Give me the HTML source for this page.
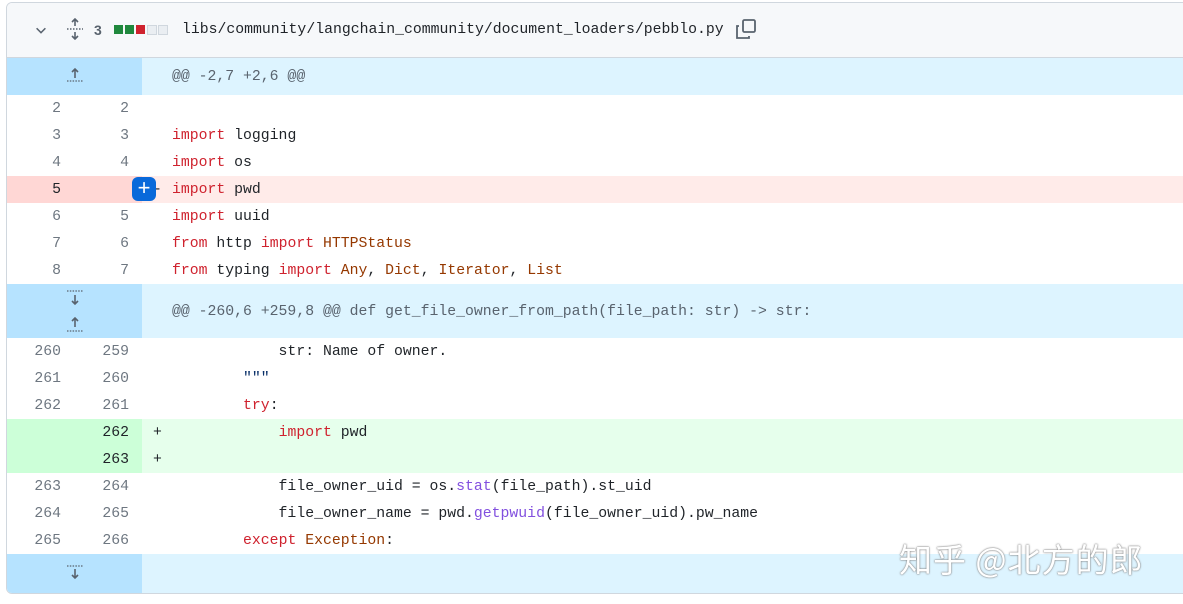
<!DOCTYPE html>
<html><head><meta charset="utf-8"><style>
body{margin:0;width:1183px;height:604px;background:#fff;position:relative;overflow:hidden;font-family:"Liberation Mono",monospace;font-size:14.8px;color:#1f2328}
.box{position:absolute;left:6px;top:2px;width:1190px;height:590px;border:1px solid #d0d7de;border-radius:6px;overflow:hidden}
.hdr{position:absolute;left:0;top:0;right:0;height:54px;background:#f6f8fa;border-bottom:1px solid #d0d7de}
.r{position:absolute;left:0;right:0;height:27px;line-height:28px;white-space:pre}
.n{position:absolute;width:40px;text-align:right;color:#6e7781}
.o{left:14px}.w{left:82px}
.c{position:absolute;left:165px}
.g{position:absolute;left:0;top:0;bottom:0;width:135px}
.k{color:#cf222e}.t{color:#953800}.s{color:#0a3069}.f{color:#8250df}
.hunk{background:#ddf4ff}.hunk .g{background:#b6e3ff}
.del{background:#ffebe9}.del .g{background:#ffd7d5}
.add{background:#e6ffec}.add .g{background:#ccffd8}
.del .n,.add .n{color:#1f2328}
.hc{position:absolute;left:165px;color:#59636e}
</style></head><body>
<div class="box">
<div class="hdr">
 <svg style="position:absolute;left:27px;top:20px" width="14" height="14" viewBox="0 0 16 16"><path d="M3 6l5 5 5-5" fill="none" stroke="#59636e" stroke-width="1.8"/></svg>
 <svg style="position:absolute;left:58px;top:15px" width="20" height="22" viewBox="0 0 20 22"><path d="M10 1v7M7 4l3-3 3 3M10 21v-7M7 18l3 3 3-3" fill="none" stroke="#59636e" stroke-width="1.6"/><path d="M2 11h16" stroke="#59636e" stroke-width="1.5" stroke-dasharray="1.5 1.5"/></svg>
 <span style="position:absolute;left:87px;top:19px;font-family:'Liberation Sans',sans-serif;font-weight:bold;font-size:14px;color:#59636e">3</span>
 <span style="position:absolute;left:107px;top:22px;width:9px;height:9px;background:#1f883d"></span>
 <span style="position:absolute;left:118px;top:22px;width:9px;height:9px;background:#1f883d"></span>
 <span style="position:absolute;left:129px;top:22px;width:9px;height:9px;background:#cf222e"></span>
 <span style="position:absolute;left:140px;top:22px;width:8px;height:8px;background:#eaeef2;border:.5px solid #d0d7de"></span>
 <span style="position:absolute;left:151px;top:22px;width:8px;height:8px;background:#eaeef2;border:.5px solid #d0d7de"></span>
 <span style="position:absolute;left:175px;top:19px;font-size:14.8px;color:#1f2328">libs/community/langchain_community/document_loaders/pebblo.py</span>
 <svg style="position:absolute;left:728px;top:15px" width="22" height="22" viewBox="0 0 22 22"><path d="M4 8H2v12h12v-2" fill="none" stroke="#59636e" stroke-width="1.8"/><rect x="8" y="2" width="12" height="12" rx="1.5" fill="none" stroke="#59636e" stroke-width="1.8"/></svg>
</div>
<div class="r hunk" style="top:55px;height:37px;line-height:38px"><div class="g"><svg style="position:absolute;left:58px;top:8px" width="20" height="18" viewBox="0 0 20 18"><path d="M10 12V3M7 6l3-3 3 3" fill="none" stroke="#59636e" stroke-width="1.6"/><path d="M2 15h16" stroke="#59636e" stroke-width="1.3" stroke-dasharray="1.5 1.3"/></svg></div><span class="hc">@@ -2,7 +2,6 @@</span></div>
<div class="r" style="top:92px"><span class="n o">2</span><span class="n w">2</span></div>
<div class="r" style="top:119px"><span class="n o">3</span><span class="n w">3</span><span class="c"><span class="k">import</span> logging</span></div>
<div class="r" style="top:146px"><span class="n o">4</span><span class="n w">4</span><span class="c"><span class="k">import</span> os</span></div>
<div class="r del" style="top:173px"><div class="g"></div><span class="n o">5</span><span style="position:absolute;left:146px">-</span><span class="c"><span class="k">import</span> pwd</span>
 <span style="position:absolute;left:125px;top:1px;width:24px;height:24px;background:#0969da;border-radius:6px;color:#fff;font-family:'Liberation Sans',sans-serif;font-size:22px;line-height:22px;text-align:center">+</span></div>
<div class="r" style="top:200px"><span class="n o">6</span><span class="n w">5</span><span class="c"><span class="k">import</span> uuid</span></div>
<div class="r" style="top:227px"><span class="n o">7</span><span class="n w">6</span><span class="c"><span class="k">from</span> http <span class="k">import</span> <span class="t">HTTPStatus</span></span></div>
<div class="r" style="top:254px"><span class="n o">8</span><span class="n w">7</span><span class="c"><span class="k">from</span> typing <span class="k">import</span> <span class="t">Any</span>, <span class="t">Dict</span>, <span class="t">Iterator</span>, <span class="t">List</span></span></div>
<div class="r hunk" style="top:281px;height:54px;line-height:56px"><div class="g"><svg style="position:absolute;left:58px;top:4px" width="20" height="46" viewBox="0 0 20 46"><path d="M2 3h16M2 43h16" stroke="#59636e" stroke-width="1.3" stroke-dasharray="1.5 1.3"/><path d="M10 7v9M7 13l3 3 3-3M10 39v-9M7 33l3-3 3 3" fill="none" stroke="#59636e" stroke-width="1.6"/></svg></div><span class="hc">@@ -260,6 +259,8 @@ def get_file_owner_from_path(file_path: str) -&gt; str:</span></div>
<div class="r" style="top:335px"><span class="n o">260</span><span class="n w">259</span><span class="c">            str: Name of owner.</span></div>
<div class="r" style="top:362px"><span class="n o">261</span><span class="n w">260</span><span class="c s">        """</span></div>
<div class="r" style="top:389px"><span class="n o">262</span><span class="n w">261</span><span class="c">        <span class="k">try</span>:</span></div>
<div class="r add" style="top:416px"><div class="g"></div><span class="n w">262</span><span style="position:absolute;left:146px">+</span><span class="c">            <span class="k">import</span> pwd</span></div>
<div class="r add" style="top:443px"><div class="g"></div><span class="n w">263</span><span style="position:absolute;left:146px">+</span></div>
<div class="r" style="top:470px"><span class="n o">263</span><span class="n w">264</span><span class="c">            file_owner_uid = os.<span class="f">stat</span>(file_path).st_uid</span></div>
<div class="r" style="top:497px"><span class="n o">264</span><span class="n w">265</span><span class="c">            file_owner_name = pwd.<span class="f">getpwuid</span>(file_owner_uid).pw_name</span></div>
<div class="r" style="top:524px"><span class="n o">265</span><span class="n w">266</span><span class="c">        <span class="k">except</span> <span class="t">Exception</span>:</span></div>
<div class="r hunk" style="top:551px;height:40px"><div class="g"><svg style="position:absolute;left:58px;top:9px" width="20" height="18" viewBox="0 0 20 18"><path d="M2 3h16" stroke="#59636e" stroke-width="1.3" stroke-dasharray="1.5 1.3"/><path d="M10 6v9M7 12l3 3 3-3" fill="none" stroke="#59636e" stroke-width="1.6"/></svg></div></div>
</div>
<div style="position:absolute;left:899px;top:534px;font-family:'Noto Sans CJK SC',sans-serif;font-size:33px;color:#fff;text-shadow:0 0 2px #888,0 0 1px #666;letter-spacing:1px">知乎 @北方的郎</div>
</body></html>
